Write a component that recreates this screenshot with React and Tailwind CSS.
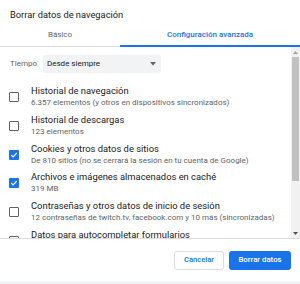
import React from "react";

const items = [
  { t: "Historial de navegación", s: "6.357 elementos (y otros en dispositivos sincronizados)", c: false },
  { t: "Historial de descargas", s: "123 elementos", c: false },
  { t: "Cookies y otros datos de sitios", s: "De 810 sitios (no se cerrará la sesión en tu cuenta de Google)", c: true },
  { t: "Archivos e imágenes almacenados en caché", s: "319 MB", c: true },
  { t: "Contraseñas y otros datos de inicio de sesión", s: "12 contraseñas de twitch.tv, facebook.com y 10 más (sincronizadas)", c: false },
  { t: "Datos para autocompletar formularios", s: "", c: false },
];

function Box({ checked }) {
  if (checked) {
    return (
      <div className="w-[10px] h-[10px] rounded-[1px] bg-[#1a73e8] flex items-center justify-center">
        <svg width="8" height="8" viewBox="0 0 8 8">
          <path d="M1.3 4.2 L3.1 6 L6.8 2" stroke="white" strokeWidth="1.2" fill="none" />
        </svg>
      </div>
    );
  }
  return <div className="w-[10px] h-[10px] rounded-[1px] border-[1.5px] border-[#5f6368]" />;
}

export default function App() {
  return (
    <div className="w-[300px] h-[284px] bg-white flex flex-col overflow-hidden" style={{ fontFamily: "Roboto, sans-serif" }}>
      <div className="h-[24px] pt-[8px] pl-[10px] text-[9.3px] leading-[13px] text-[#202124]">Borrar datos de navegación</div>
      <div className="h-[23px] flex border-b border-[#dadce0]">
        <div className="w-[120px] flex items-center justify-center text-[8px] text-[#5f6368] pb-[1px]">Básico</div>
        <div className="flex-1 flex items-center justify-center text-[8px] font-medium text-[#1a73e8] border-b-2 border-[#1a73e8] -mb-px">Configuración avanzada</div>
      </div>
      <div className="flex-1 flex min-h-0">
        <div className="flex-1 min-w-0 overflow-hidden">
          <div className="flex items-center pt-[8px] pl-[10px]">
            <span className="text-[8px] text-[#5f6368] w-[33px] shrink-0">Tiempo</span>
            <div className="w-[118px] h-[18px] rounded-[3px] bg-[#f1f3f4] flex items-center justify-between pl-[4px] pr-[5px]">
              <span className="text-[8px] text-[#202124]">Desde siempre</span>
              <svg width="6" height="4" viewBox="0 0 6 4"><path d="M0 0 L6 0 L3 3.5 Z" fill="#5f6368" /></svg>
            </div>
          </div>
          <div className="pt-[12px]">
            {items.map((it, i) => (
              <div key={i} className="h-[28.8px] flex">
                <div className="w-[31px] shrink-0 h-[24px] flex items-center pl-[9px]">
                  <Box checked={it.c} />
                </div>
                <div className="flex flex-col whitespace-nowrap min-w-0">
                  <div className="text-[9.4px] leading-[12px] text-[#202124]">{it.t}</div>
                  <div className="text-[8px] leading-[12px] text-[#5f6368]">{it.s}</div>
                </div>
              </div>
            ))}
          </div>
        </div>
        <div className="w-[9px] shrink-0 bg-[#f1f1f1] flex flex-col items-center">
          <div className="h-[10px] flex items-center justify-center">
            <svg width="5" height="3" viewBox="0 0 5 3"><path d="M0 3 L5 3 L2.5 0 Z" fill="#a3a3a3" /></svg>
          </div>
          <div className="w-[7px] h-[124px] bg-[#c1c1c1]" />
          <div className="flex-1" />
          <div className="h-[10px] flex items-center justify-center">
            <svg width="5" height="3" viewBox="0 0 5 3"><path d="M0 0 L5 0 L2.5 3 Z" fill="#505050" /></svg>
          </div>
        </div>
      </div>
      <div className="h-[43px] border-t border-[#dadce0] flex items-center justify-end gap-[5px] pr-[9px]">
        <button className="w-[50px] h-[19px] rounded-[3px] border border-[#dadce0] bg-white text-[7.6px] font-medium text-[#1a73e8]">Cancelar</button>
        <button className="w-[62px] h-[19px] rounded-[3px] bg-[#1a73e8] text-[7.8px] font-medium text-white">Borrar datos</button>
      </div>
      <div className="h-[3px] bg-[#f1f3f4]" />
    </div>
  );
}
